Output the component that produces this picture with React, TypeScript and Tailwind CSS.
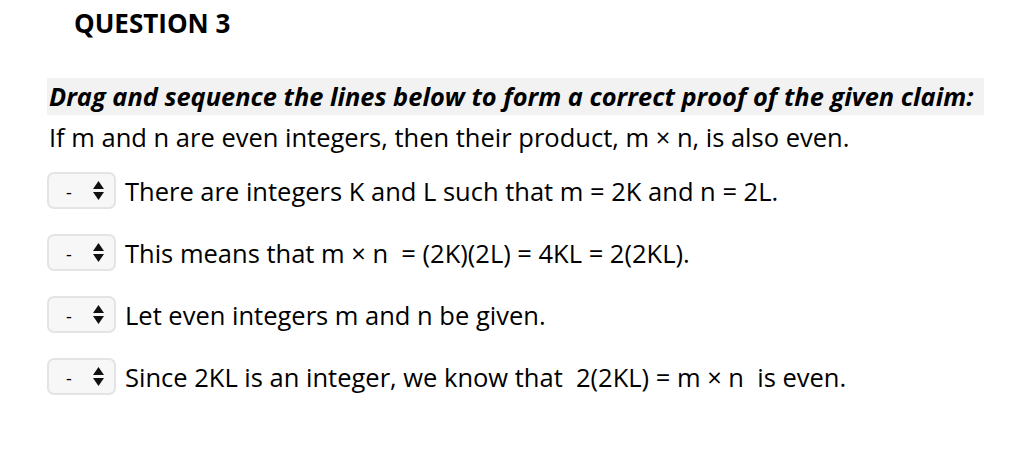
import React from 'react';

const steps = [
  'There are integers K and L such that m = 2K and n = 2L.',
  'This means that m \u00d7 n  = (2K)(2L) = 4KL = 2(2KL).',
  'Let even integers m and n be given.',
  'Since 2KL is an integer, we know that  2(2KL) = m \u00d7 n  is even.',
];

// the little up/down arrows drawn by the native select
const Spinner = () => (
  <svg width="11" height="19" viewBox="0 0 11 19" className="shrink-0">
    <path d="M5.5 0 L11 8 L0 8 Z" fill="#111" />
    <path d="M0 11 L11 11 L5.5 19 Z" fill="#111" />
  </svg>
);

const OrderSelect = () => (
  <div className="flex h-[37px] w-[69px] shrink-0 items-center justify-between rounded-[7px] border-2 border-[#e4e4e4] bg-[#f7f7f7] pl-[17px] pr-[10px]">
    <span className="pt-[3px] text-[18px] leading-none">-</span>
    <Spinner />
  </div>
);

export default function App() {
  return (
    <div
      className="h-[450px] w-[1024px] bg-white pl-[47px] text-black"
      style={{ fontFamily: '"Open Sans", sans-serif' }}
    >
      <h1 className="pt-[8px] pl-[27px] text-[26px] font-bold leading-[30px]">QUESTION 3</h1>

      <div className="mt-[40px] w-[937px] whitespace-nowrap bg-[#f2f2f2] pl-[2px] text-[25.4px] font-bold italic leading-[37px]">
        Drag and sequence the lines below to form a correct proof of the given claim:
      </div>
      <p className="pl-[2px] text-[25.5px] leading-[44px]">
        If m and n are even integers, then their product, m × n, is also even.
      </p>

      <div className="mt-[13px] flex flex-col gap-[25px]">
        {steps.map((s) => (
          <div key={s} className="flex items-center gap-[9px]">
            <OrderSelect />
            <span className="whitespace-pre text-[25.5px] leading-[36px]">{s}</span>
          </div>
        ))}
      </div>
    </div>
  );
}
